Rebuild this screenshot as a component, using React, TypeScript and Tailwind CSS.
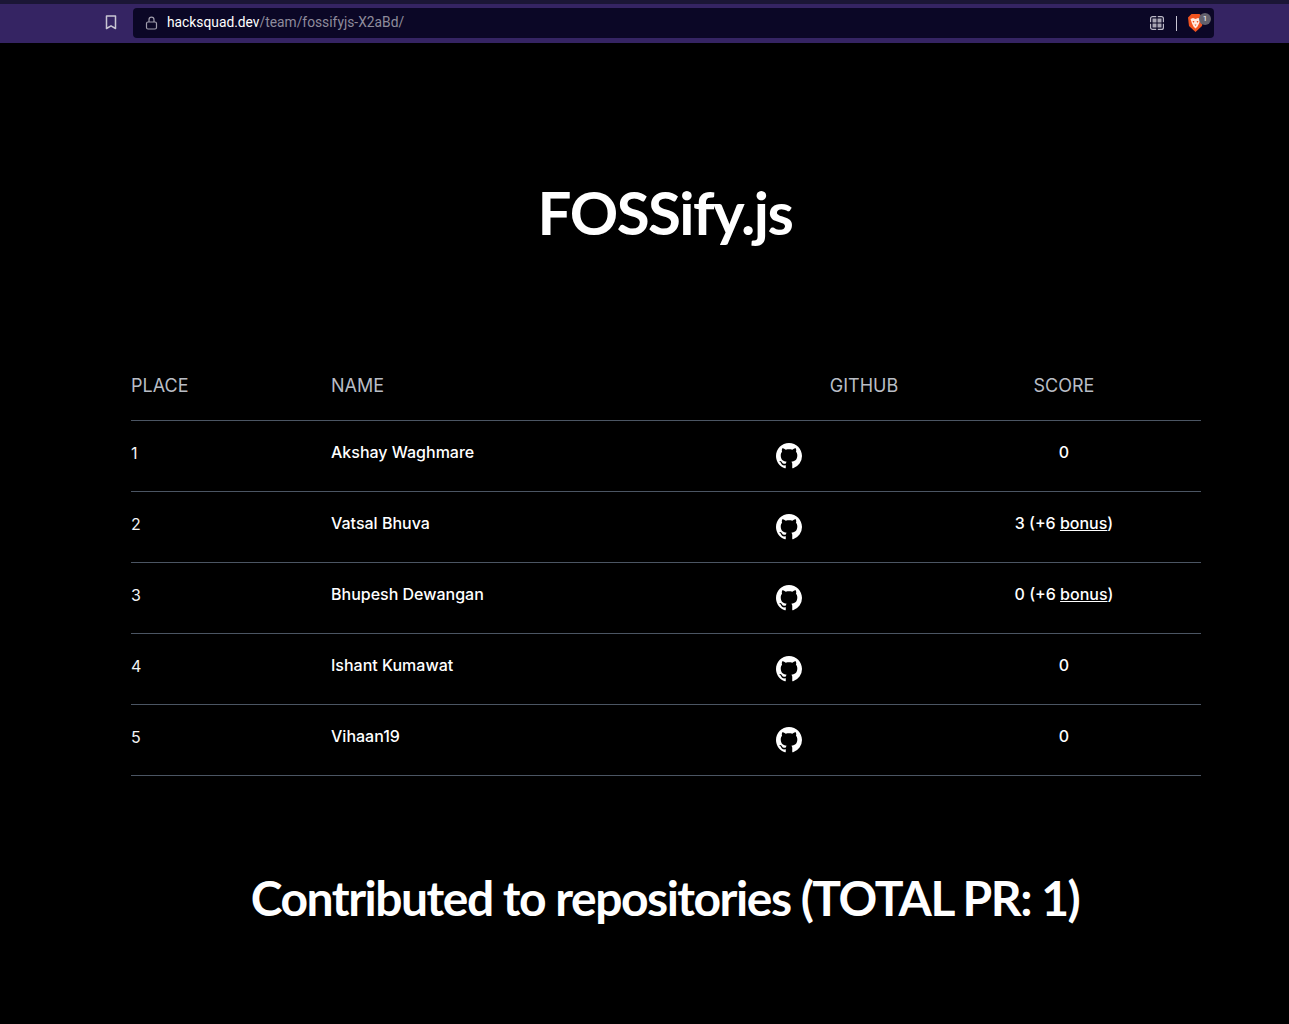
import React from 'react'

const members = [
  { place: '1', name: 'Akshay Waghmare', score: '0', bonus: false },
  { place: '2', name: 'Vatsal Bhuva', score: '3', bonus: true },
  { place: '3', name: 'Bhupesh Dewangan', score: '0', bonus: true },
  { place: '4', name: 'Ishant Kumawat', score: '0', bonus: false },
  { place: '5', name: 'Vihaan19', score: '0', bonus: false },
]

function GithubMark () {
  return (
    <svg className="w-[26px] h-[26px] text-white" viewBox="0 0 16 16" fill="currentColor">
      <path d="M8 0C3.58 0 0 3.58 0 8c0 3.54 2.29 6.53 5.47 7.59.4.07.55-.17.55-.38 0-.19-.01-.82-.01-1.49-2.01.37-2.53-.49-2.69-.94-.09-.23-.48-.94-.82-1.13-.28-.15-.68-.52-.01-.53.63-.01 1.08.58 1.23.82.72 1.21 1.87.87 2.33.66.07-.52.28-.87.51-1.07-1.78-.2-3.64-.89-3.64-3.95 0-.87.31-1.59.82-2.15-.08-.2-.36-1.02.08-2.12 0 0 .67-.21 2.2.82.64-.18 1.32-.27 2-.27s1.36.09 2 .27c1.53-1.04 2.2-.82 2.2-.82.44 1.1.16 1.92.08 2.12.51.56.82 1.27.82 2.15 0 3.07-1.87 3.75-3.65 3.95.29.25.54.73.54 1.48 0 1.07-.01 1.93-.01 2.2 0 .21.15.46.55.38A8.01 8.01 0 0 0 16 8c0-4.42-3.58-8-8-8z" />
    </svg>
  )
}

function BrowserBar () {
  return (
    <div className="h-[43px] bg-[#352463] border-t-4 border-[#1b1636] pt-1 pl-[133px] pr-[75px] flex">
      <div className="relative flex-1 h-[30px] bg-[#0b0726] rounded flex items-center pl-[12px] pr-[8px] font-['Roboto',sans-serif] text-[13.8px]">
        <svg className="absolute left-[-28px] top-[7px] w-[12px] h-[15px] text-[#c9c6d4]" viewBox="0 0 12 15" fill="none" stroke="currentColor" strokeWidth="1.5">
          <path d="M1.500 1h9v12.500L6 10.800l-4.500 2.700z" strokeLinejoin="round" />
        </svg>
        <svg className="w-[13px] h-[14px] text-[#a09dac]" viewBox="0 0 12 14" fill="none" stroke="currentColor" strokeWidth="1.2">
          <rect x="1" y="6" width="10" height="7" rx="1.500" />
          <path d="M3.500 6V3.700a2.500 2.500 0 0 1 5 0V6" />
        </svg>
        <span className="ml-[9px] text-white -translate-y-px">hacksquad.dev</span>
        <span className="text-[#8f8c9c] -translate-y-px">/team/fossifyjs-X2aBd/</span>
        <div className="ml-auto flex items-center">
          <svg className="w-[14px] h-[14px]" viewBox="0 0 14 14" fill="none">
            <rect x="0.600" y="0.600" width="12.800" height="12.800" rx="2" stroke="#bdbac8" strokeWidth="1.200" />
            <path d="M7 0v14M0 7h14" stroke="#0b0726" strokeWidth="1.500" />
            <rect x="2.500" y="2.500" width="4" height="4" fill="#a9a6b4" />
            <rect x="7.500" y="2.500" width="4" height="4" fill="#a9a6b4" />
            <rect x="2.500" y="7.500" width="4" height="4" fill="#a9a6b4" />
            <rect x="7.500" y="7.500" width="4" height="4" fill="#a9a6b4" />
          </svg>
          <div className="ml-[12px] w-px h-[15px] bg-[#c9c6d4]" />
          <div className="relative ml-[11px] w-[18px] h-[18px]">
            <svg className="w-[15px] h-[18px]" viewBox="0 0 15 18">
              <path d="M3.500 0h8L15 3.500 14 12l-6.500 6L1 12 0 3.500z" fill="#f1531f" />
              <path d="M2.500 5l2.500-1 2.500 1 2.500-1 2.500 1-1.500 4.500-1.500 3-2 2-2-2-1.500-3z" fill="#ffe9df" />
              <path d="M4.500 7h2L5.500 9zM8.500 7h2L9.500 9zM6.500 10.500h2L7.500 12z" fill="#f1531f" />
            </svg>
            <span className="absolute left-[11px] top-[-1px] w-[12px] h-[12px] rounded-full bg-[#62616c] text-white text-[8px] leading-[12px] text-center">1</span>
          </div>
        </div>
      </div>
    </div>
  )
}

export default function App () {
  return (
    <div className="min-h-[1024px] bg-black text-white font-['Inter',sans-serif] overflow-hidden">
      <BrowserBar />

      <h1 className="mt-[133px] text-center text-[60px] leading-[72px] font-bold tracking-[-0.025em] font-['Lato',sans-serif] pl-[41px] w-[1289px]">
        FOSSify.js
      </h1>

      <div className="mt-[119px] ml-[131px] w-[1070px]">
        <div className="grid grid-cols-[200px_433px_200px_200px_37px] h-[53px] pt-[5px] text-[18px] leading-[28px] text-[#b9bdc5]">
          <div>PLACE</div>
          <div>NAME</div>
          <div className="text-center">GITHUB</div>
          <div className="text-center">SCORE</div>
        </div>
        {members.map((m) => (
          <div key={m.place} className="grid grid-cols-[200px_433px_200px_200px_37px] h-[71px] border-t border-[#4b5563] text-[16px] leading-[24px] items-start">
            <div className="pt-[20px] text-[#f3f4f6]">{m.place}</div>
            <div className="pt-[19px] font-medium">{m.name}</div>
            <div className="pt-[22px] pl-[12px]"><GithubMark /></div>
            <div className="pt-[19px] text-center font-medium">
              {m.score}
              {m.bonus && <> (+6 <a className="underline">bonus</a>)</>}
            </div>
          </div>
        ))}
        <div className="border-t border-[#4b5563]" />
      </div>

      <h2 className="mt-[92px] text-center text-[48px] leading-[60px] font-bold tracking-[-0.031em] font-['Lato',sans-serif] pl-[41px] w-[1289px]">
        Contributed to repositories (TOTAL PR: 1)
      </h2>
    </div>
  )
}
